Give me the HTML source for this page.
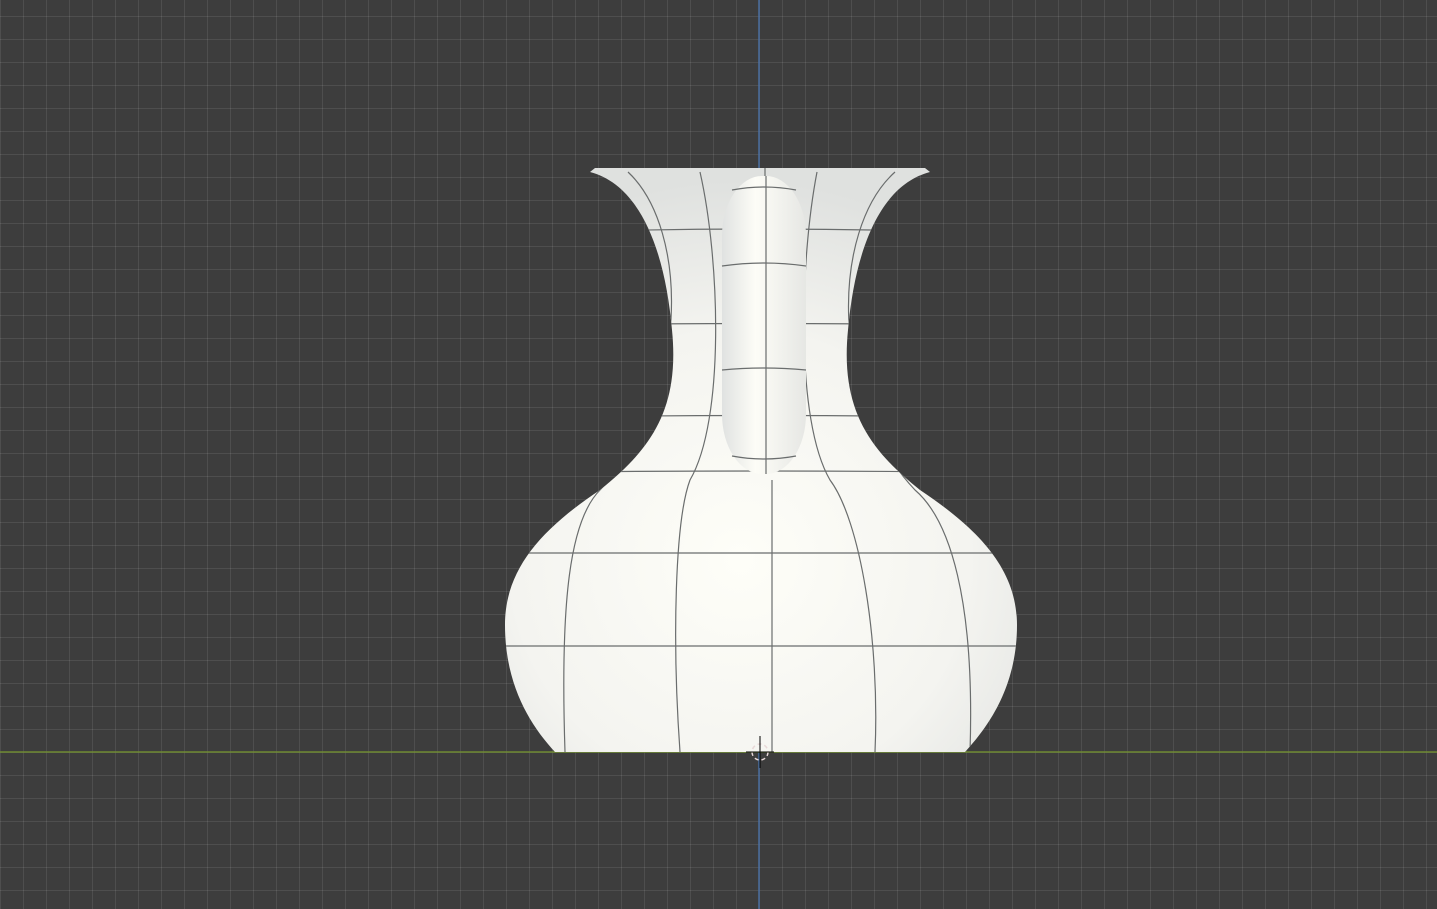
<!DOCTYPE html>
<html><head><style>
html,body{margin:0;padding:0;width:1437px;height:909px;overflow:hidden;background:#3d3d3d}
.g{position:absolute;inset:0;
background-image:
linear-gradient(to right,rgba(255,255,255,0.09) 1px,transparent 1px),
linear-gradient(to bottom,rgba(255,255,255,0.09) 1px,transparent 1px);
background-size:23px 23px;background-position:0px 16px;}
</style></head><body>
<div class="g"></div>
<svg width="1437" height="909" style="position:absolute;left:0;top:0">
<defs>
<radialGradient id="b" cx="740" cy="560" r="380" gradientUnits="userSpaceOnUse">
<stop offset="0" stop-color="#fefef8"/><stop offset="0.6" stop-color="#f4f4f0"/><stop offset="1" stop-color="#dfe1df"/></radialGradient>
<linearGradient id="h" x1="0" x2="1"><stop offset="0" stop-color="#e0e2e1"/><stop offset="0.4" stop-color="#fdfdf7"/><stop offset="1" stop-color="#e6e7e4"/></linearGradient>
<clipPath id="c"><path id="v" d="M590,172 C640,185 665,250 672,330 C680,410 650,450 600,490 C540,530 505,570 505,625 C505,685 530,725 555,752 L965,752 C990,725 1017,685 1017,625 C1017,570 980,530 920,490 C870,450 840,410 848,330 C855,250 880,185 930,172 L925,168 L595,168 Z"/></clipPath>
</defs>
<line x1="759" y1="0" x2="759" y2="909" stroke="#4a6fa0" stroke-width="1.5"/>
<line x1="0" y1="752" x2="1437" y2="752" stroke="#6e8a32" stroke-width="1.5"/>
<use href="#v" fill="url(#b)"/>
<g clip-path="url(#c)" stroke="#6a6d6d" stroke-width="1.2" fill="none">
<path d="M560,232 Q760,226 960,232"/>
<path d="M560,325 Q760,322 960,325"/>
<path d="M560,417 Q760,414 960,417"/>
<path d="M560,472 Q760,470 960,472"/>
<path d="M500,553 L1020,553"/>
<path d="M500,646 L1020,646"/>
<path d="M628,172 C690,230 690,400 600,490 C570,520 560,600 565,752"/>
<path d="M700,172 C720,260 725,420 690,480 C675,520 672,640 680,752"/>
<path d="M817,172 C800,260 795,420 830,480 C860,520 880,640 875,752"/>
<path d="M895,172 C830,230 830,400 915,490 C950,520 975,600 970,752"/>
<path d="M772,480 L772,752"/>
<path d="M765,168 L765,178"/>
</g>
<rect x="722" y="176" width="84" height="298" rx="40" ry="60" fill="url(#h)"/>
<g stroke="#6a6d6d" stroke-width="1.2" fill="none">
<path d="M732,190 Q764,184 796,190"/>
<path d="M722,266 Q764,260 806,266"/>
<path d="M722,370 Q764,366 806,370"/>
<path d="M732,456 Q764,462 796,456"/>
<path d="M766,176 L766,474"/>
</g>
<circle cx="760" cy="752" r="8" fill="none" stroke="#e8d8d8" stroke-width="1.5" stroke-dasharray="4 3"/>
<path d="M760,736 V768 M746,752 H774" stroke="#000" stroke-width="1"/>
</svg>
</body></html>
